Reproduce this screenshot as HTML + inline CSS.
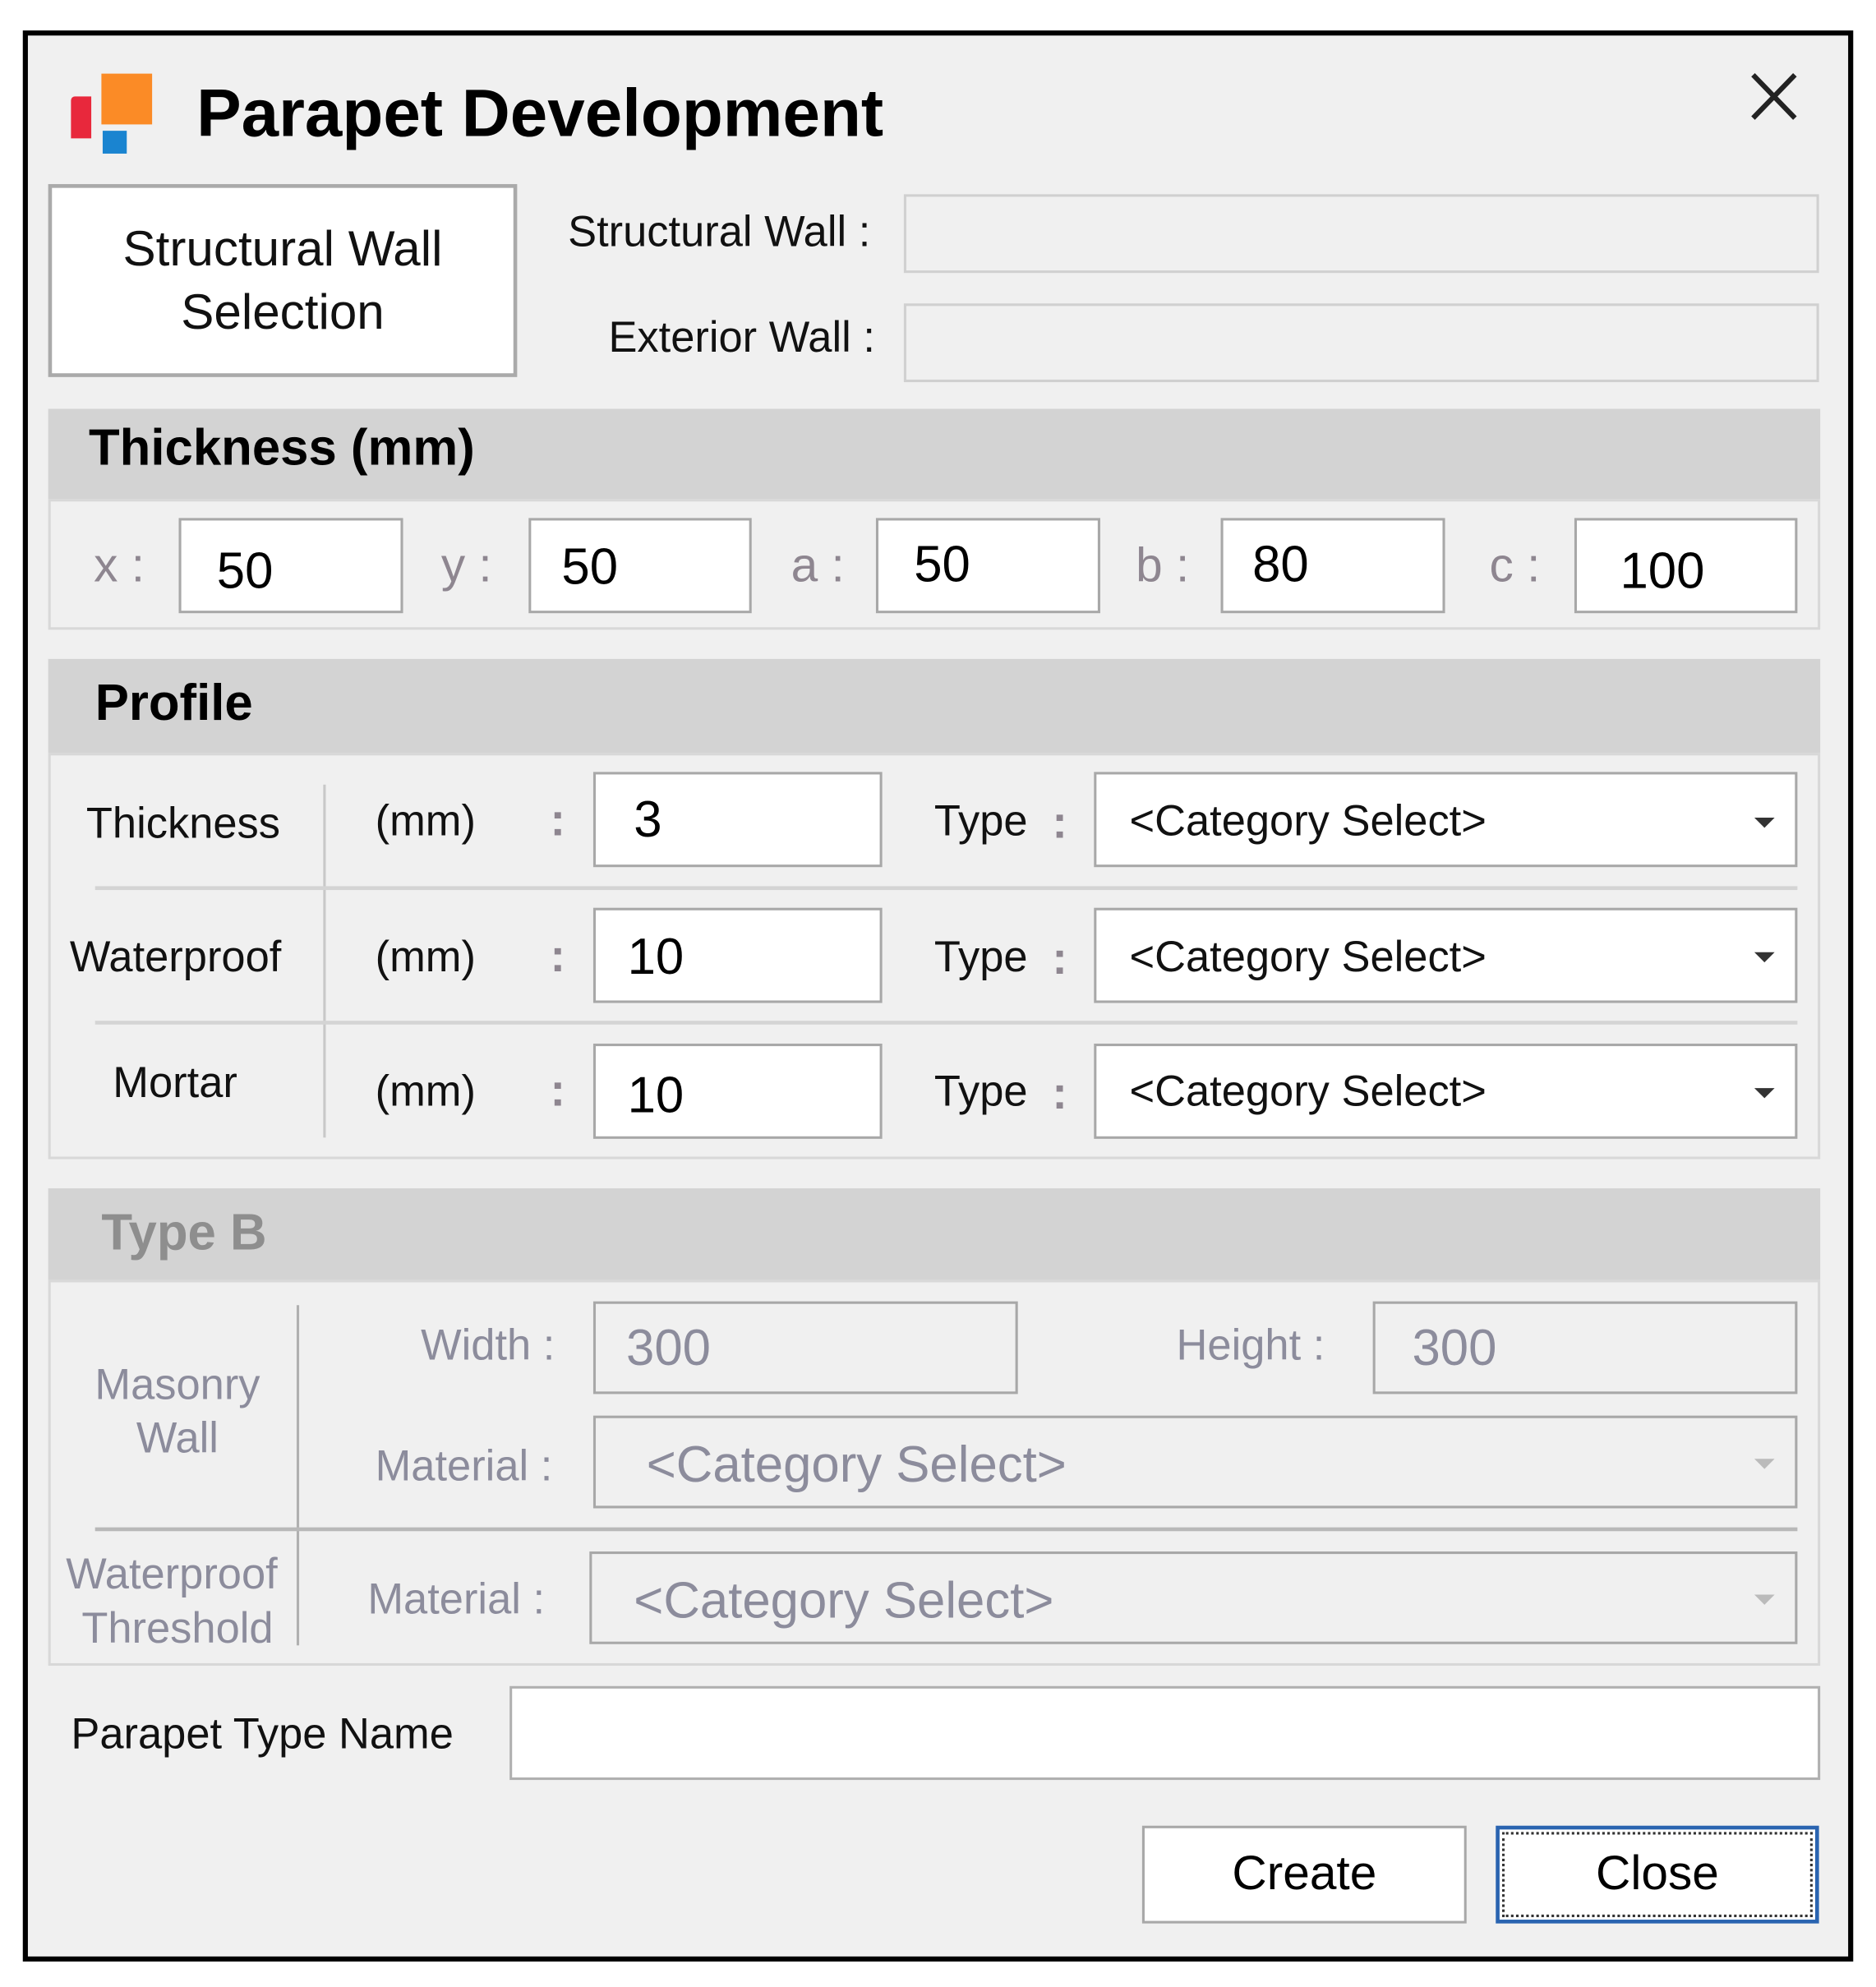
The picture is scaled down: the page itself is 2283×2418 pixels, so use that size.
<!DOCTYPE html>
<html><head><meta charset="utf-8"><style>
html,body{margin:0;padding:0;background:#fff;}
body{width:2283px;height:2418px;overflow:hidden;position:relative;}
#s{position:absolute;left:0;top:0;width:1480px;height:1565px;transform:scale(1.5426,1.545);transform-origin:0 0;font-family:"Liberation Sans",Arial,sans-serif;}
.a{position:absolute;}
.t{position:absolute;white-space:nowrap;line-height:1;}
.win{left:18px;top:24px;width:1436px;height:1513px;border:4px solid #000;background:#f0f0f0;}
.in{position:absolute;background:#fff;border:2px solid #a8a8a8;box-sizing:border-box;}
.ro{position:absolute;background:#f0f0f0;border:2px solid #d0d0d0;box-sizing:border-box;}
.dis{position:absolute;background:#f0f0f0;border:2px solid #a8a8a8;box-sizing:border-box;}
.hd{position:absolute;left:38px;width:1398px;background:#d3d3d3;}
.bd{position:absolute;left:38px;width:1398px;border:2px solid #d8d8d8;box-sizing:border-box;}
.lbl{font-size:34px;color:#111;}
.val{font-size:40px;color:#000;}
.gl{font-size:34px;color:#8c8c9c;}
.arr{position:absolute;width:0;height:0;border-left:8px solid transparent;border-right:8px solid transparent;border-top:8px solid #333;}
.col{color:#8e8690;font-size:38px;}
.vl{position:absolute;width:2px;background:#c8c8c8;}
.hl{position:absolute;height:3px;background:#d4d4d4;left:75px;width:1343px;}
</style></head><body><div id="s">
<div class="a win"></div>
<div class="a" style="left:56px;top:76px;width:16px;height:33px;background:#e8283c;border-radius:3px 0 0 0;"></div>
<div class="a" style="left:80px;top:58px;width:40px;height:40px;background:#fb8b26;"></div>
<div class="a" style="left:81px;top:103px;width:19px;height:18px;background:#1a84d0;"></div>
<div class="t" style="left:155px;top:63px;font-size:53px;font-weight:bold;">Parapet Development</div>
<svg class="a" style="left:1380px;top:56px" width="40" height="40"><path d="M3 3L36 37M36 3L3 37" stroke="#222" stroke-width="4" fill="none"/></svg>

<div class="in" style="left:38px;top:145px;width:370px;height:152px;border:3px solid #aaa;"></div>
<div class="t lbl" style="left:38px;width:370px;text-align:center;top:177px;font-size:39px;">Structural Wall</div>
<div class="t lbl" style="left:38px;width:370px;text-align:center;top:227px;font-size:39px;">Selection</div>
<div class="t lbl" style="left:448px;top:166px;">Structural Wall :</div>
<div class="ro" style="left:713px;top:153px;width:722px;height:62px;"></div>
<div class="t lbl" style="left:480px;top:249px;">Exterior Wall :</div>
<div class="ro" style="left:713px;top:239px;width:722px;height:62px;"></div>

<div class="hd" style="top:322px;height:71px;"></div>
<div class="t" style="left:70px;top:333px;font-size:40px;font-weight:bold;">Thickness (mm)</div>
<div class="bd" style="top:393px;height:103px;"></div>
<div class="t col" style="left:74px;top:427px;">x :</div>
<div class="in" style="left:141px;top:408px;width:177px;height:75px;"></div><div class="t val" style="left:171px;top:430px;">50</div>
<div class="t col" style="left:348px;top:427px;">y :</div>
<div class="in" style="left:417px;top:408px;width:176px;height:75px;"></div><div class="t val" style="left:443px;top:427px;">50</div>
<div class="t col" style="left:624px;top:427px;">a :</div>
<div class="in" style="left:691px;top:408px;width:177px;height:75px;"></div><div class="t val" style="left:721px;top:425px;">50</div>
<div class="t col" style="left:896px;top:427px;">b :</div>
<div class="in" style="left:963px;top:408px;width:177px;height:75px;"></div><div class="t val" style="left:988px;top:425px;">80</div>
<div class="t col" style="left:1175px;top:427px;">c :</div>
<div class="in" style="left:1242px;top:408px;width:176px;height:75px;"></div><div class="t val" style="left:1278px;top:430px;">100</div>

<div class="hd" style="top:519px;height:74px;"></div>
<div class="t" style="left:75px;top:534px;font-size:40px;font-weight:bold;">Profile</div>
<div class="bd" style="top:593px;height:320px;"></div>
<div class="vl" style="left:255px;top:618px;height:278px;"></div>
<div class="hl" style="top:698px;"></div>
<div class="hl" style="top:804px;"></div>

<div class="t lbl" style="left:68px;top:632px;">Thickness</div>
<div class="t lbl" style="left:55px;top:737px;">Waterproof</div>
<div class="t lbl" style="left:89px;top:836px;">Mortar</div>

<div class="t lbl" style="left:296px;top:630px;">(mm)</div>
<div class="t lbl" style="left:296px;top:737px;">(mm)</div>
<div class="t lbl" style="left:296px;top:843px;">(mm)</div>
<div class="t col" style="left:434px;top:628px;font-size:36px;font-weight:bold;">:</div>
<div class="t col" style="left:434px;top:735px;font-size:36px;font-weight:bold;">:</div>
<div class="t col" style="left:434px;top:841px;font-size:36px;font-weight:bold;">:</div>
<div class="in" style="left:468px;top:608px;width:228px;height:75px;"></div><div class="t val" style="left:500px;top:626px;">3</div>
<div class="in" style="left:468px;top:715px;width:228px;height:75px;"></div><div class="t val" style="left:495px;top:734px;">10</div>
<div class="in" style="left:468px;top:822px;width:228px;height:75px;"></div><div class="t val" style="left:495px;top:843px;">10</div>
<div class="t lbl" style="left:737px;top:630px;">Type</div>
<div class="t lbl" style="left:737px;top:737px;">Type</div>
<div class="t lbl" style="left:737px;top:843px;">Type</div>
<div class="t col" style="left:830px;top:630px;font-size:36px;font-weight:bold;">:</div>
<div class="t col" style="left:830px;top:737px;font-size:36px;font-weight:bold;">:</div>
<div class="t col" style="left:830px;top:843px;font-size:36px;font-weight:bold;">:</div>
<div class="in" style="left:863px;top:608px;width:555px;height:75px;"></div><div class="t lbl" style="left:891px;top:630px;">&lt;Category Select&gt;</div><div class="arr" style="left:1384px;top:644px;"></div>
<div class="in" style="left:863px;top:715px;width:555px;height:75px;"></div><div class="t lbl" style="left:891px;top:737px;">&lt;Category Select&gt;</div><div class="arr" style="left:1384px;top:750px;"></div>
<div class="in" style="left:863px;top:822px;width:555px;height:75px;"></div><div class="t lbl" style="left:891px;top:843px;">&lt;Category Select&gt;</div><div class="arr" style="left:1384px;top:857px;"></div>

<div class="hd" style="top:936px;height:72px;"></div>
<div class="t" style="left:80px;top:951px;font-size:40px;font-weight:bold;color:#8e8e8e;">Type B</div>
<div class="bd" style="top:1008px;height:304px;"></div>
<div class="vl" style="left:234px;top:1028px;height:268px;background:#b0b0b0;"></div>
<div class="hl" style="top:1203px;background:#b8b8b8;"></div>
<div class="t gl" style="left:40px;width:200px;text-align:center;top:1074px;">Masonry</div>
<div class="t gl" style="left:40px;width:200px;text-align:center;top:1116px;">Wall</div>
<div class="t gl" style="left:52px;top:1223px;">Waterproof</div>
<div class="t gl" style="left:40px;width:200px;text-align:center;top:1266px;">Threshold</div>
<div class="t gl" style="left:332px;top:1043px;">Width :</div>
<div class="dis" style="left:468px;top:1025px;width:335px;height:73px;"></div><div class="t" style="left:494px;top:1042px;font-size:40px;color:#8c8c9c;">300</div>
<div class="t gl" style="left:928px;top:1043px;">Height :</div>
<div class="dis" style="left:1083px;top:1025px;width:335px;height:73px;"></div><div class="t" style="left:1114px;top:1042px;font-size:40px;color:#8c8c9c;">300</div>
<div class="t gl" style="left:296px;top:1138px;">Material :</div>
<div class="dis" style="left:468px;top:1115px;width:950px;height:73px;"></div><div class="t" style="left:510px;top:1134px;font-size:40px;color:#8c8c9c;">&lt;Category Select&gt;</div><div class="arr" style="left:1384px;top:1149px;border-top-color:#bbb;"></div>
<div class="t gl" style="left:290px;top:1243px;">Material :</div>
<div class="dis" style="left:465px;top:1222px;width:953px;height:73px;"></div><div class="t" style="left:500px;top:1241px;font-size:40px;color:#8c8c9c;">&lt;Category Select&gt;</div><div class="arr" style="left:1384px;top:1256px;border-top-color:#bbb;"></div>

<div class="t lbl" style="left:56px;top:1349px;">Parapet Type Name</div>
<div class="in" style="left:402px;top:1328px;width:1034px;height:74px;border-color:#b0b0b0;"></div>

<div class="in" style="left:901px;top:1438px;width:256px;height:77px;"></div>
<div class="t" style="left:901px;width:256px;text-align:center;top:1457px;font-size:38px;">Create</div>
<div class="a" style="left:1180px;top:1438px;width:255px;height:77px;background:#fff;border:3px solid #2a64b0;box-sizing:border-box;"></div>
<div class="a" style="left:1185px;top:1443px;width:245px;height:67px;border:2px dotted #333;box-sizing:border-box;"></div>
<div class="t" style="left:1180px;width:255px;text-align:center;top:1457px;font-size:38px;">Close</div>
</div></body></html>
